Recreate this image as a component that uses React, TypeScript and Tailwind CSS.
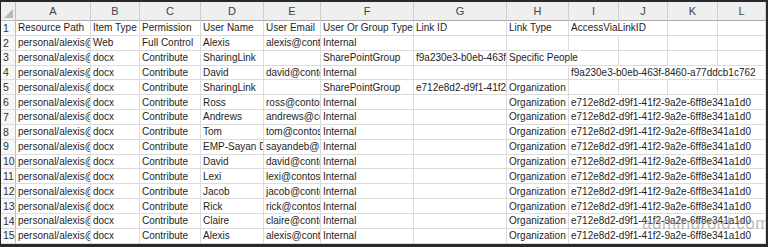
import React from 'react';

const COLS = [
  { key: 'A', w: 75 },
  { key: 'B', w: 49 },
  { key: 'C', w: 61 },
  { key: 'D', w: 63 },
  { key: 'E', w: 57 },
  { key: 'F', w: 93 },
  { key: 'G', w: 93 },
  { key: 'H', w: 62 },
  { key: 'I', w: 50 },
  { key: 'J', w: 49 },
  { key: 'K', w: 50 },
  { key: 'L', w: 48 },
];

const PATH = 'personal/alexis@contoso_onmicrosoft_com/Documents';
const LINK1 = 'f9a230e3-b0eb-463f-8460-a77ddcb1c762';
const LINK2 = 'e712e8d2-d9f1-41f2-9a2e-6ff8e341a1d0';

// [text, span]; span lets text run over empty neighbours like Excel does
type Cell = [string, number?];

const people = [
  ['Ross', 'ross@contoso.com'],
  ['Andrews', 'andrews@contoso.com'],
  ['Tom', 'tom@contoso.com'],
  ['EMP-Sayan Deb', 'sayandeb@contoso.com'],
  ['David', 'david@contoso.com'],
  ['Lexi', 'lexi@contoso.com'],
  ['Jacob', 'jacob@contoso.com'],
  ['Rick', 'rick@contoso.com'],
  ['Claire', 'claire@contoso.com'],
  ['Alexis', 'alexis@contoso.com'],
];

const rows: Cell[][] = [
  [['Resource Path'], ['Item Type'], ['Permission'], ['User Name'], ['User Email'], ['User Or Group Type'], ['Link ID'], ['Link Type'], ['AccessViaLinkID', 2], [''], ['']],
  [[PATH], ['Web'], ['Full Control'], ['Alexis'], ['alexis@contoso.com'], ['Internal'], [''], [''], [''], [''], [''], ['']],
  [[PATH], ['docx'], ['Contribute'], ['SharingLink'], [''], ['SharePointGroup'], [LINK1], ['Specific People', 2], [''], [''], ['']],
  [[PATH], ['docx'], ['Contribute'], ['David'], ['david@contoso.com'], ['Internal'], [''], [''], [LINK1, 4]],
  [[PATH], ['docx'], ['Contribute'], ['SharingLink'], [''], ['SharePointGroup'], [LINK2], ['Organization'], [''], [''], [''], ['']],
  ...people.map(([name, mail]): Cell[] => [
    [PATH], ['docx'], ['Contribute'], [name], [mail], ['Internal'], [''], ['Organization'], [LINK2, 4],
  ]),
];

function Corner() {
  return (
    <div className="w-[15px] h-full bg-[#efefef] border-r border-b border-[#bdbdbd] relative shrink-0">
      <svg className="absolute right-[2px] bottom-[2px]" width="9" height="9" viewBox="0 0 9 9">
        <polygon points="9,0 9,9 0,9" fill="#b9b9b9" />
      </svg>
    </div>
  );
}

export default function App() {
  let colIdx = 0;
  return (
    <div
      className="relative w-[768px] h-[247px] box-border bg-white border-[#2a2a2a] border-t-2 border-l border-r-2 border-b-[3px] overflow-hidden text-[10px] text-[#1e1e1e]"
      style={{ fontFamily: '"Liberation Sans", Arial, sans-serif' }}
    >
      <div className="flex h-[19px]">
        <Corner />
        {COLS.map((c) => (
          <div
            key={c.key}
            style={{ width: c.w }}
            className="shrink-0 h-full bg-[#efefef] border-r border-b border-r-[#d0d0d0] border-b-[#ababab] flex items-center justify-center text-[#444] text-[11px]"
          >
            {c.key}
          </div>
        ))}
      </div>

      {rows.map((row, r) => {
        colIdx = 0;
        return (
          <div key={r} className="flex h-[14.85px]">
            <div className="w-[15px] shrink-0 h-full bg-[#f7f7f7] border-r border-b border-r-[#bdbdbd] border-b-[#dcdcdc] flex items-center pl-[2px] text-[#333] text-[10.5px] leading-none">
              {r + 1}
            </div>
            {row.map(([text, span = 1], i) => {
              const w = COLS.slice(colIdx, colIdx + span).reduce((s, c) => s + c.w, 0);
              colIdx += span;
              return (
                <div
                  key={i}
                  style={{ width: w }}
                  className="shrink-0 h-full border-r border-b border-[#dcdcdc] flex items-center pl-[2px] pt-[1px] overflow-hidden whitespace-nowrap leading-none"
                >
                  {text}
                </div>
              );
            })}
          </div>
        );
      })}

      <div className="absolute left-[641px] top-[209px] text-[17px] font-light tracking-[0.5px] text-[#8f8f8f]/60 pointer-events-none">
        admindroid.com
      </div>
    </div>
  );
}
